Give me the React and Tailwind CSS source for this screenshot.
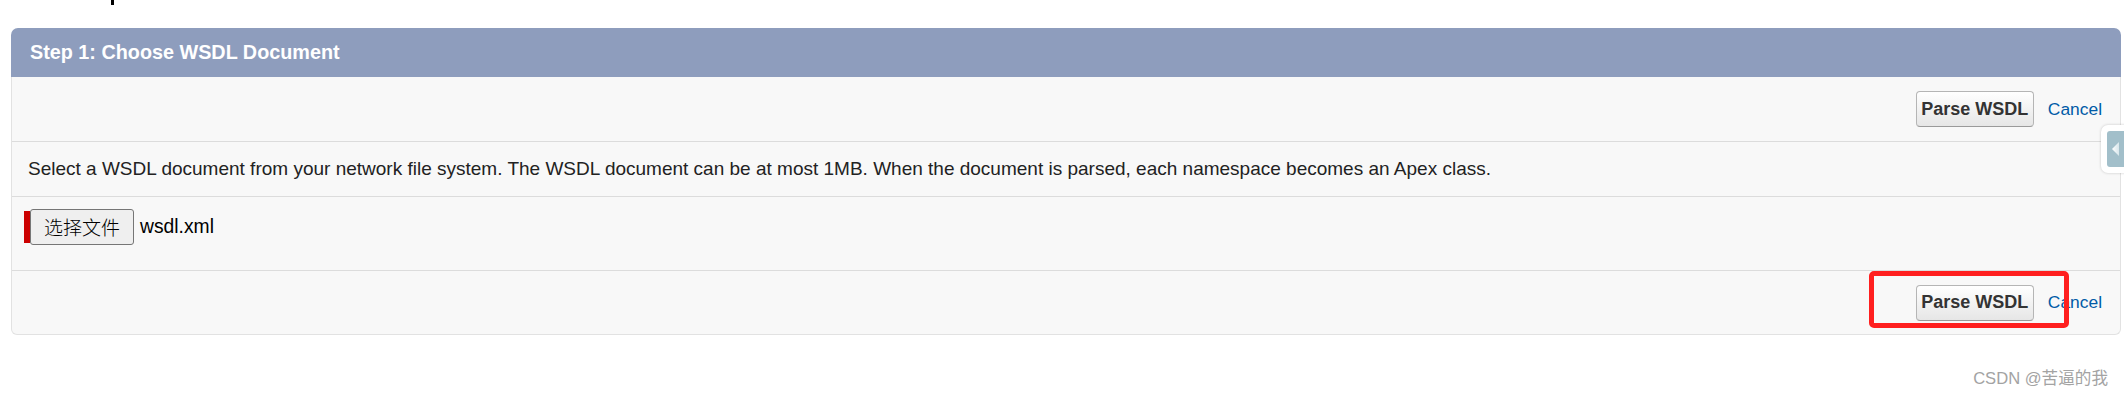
const font = "font-['Liberation_Sans',Arial,'Noto_Sans_CJK_SC',sans-serif]";

function ParseButton() {
  return (
    <button className="h-[36px] w-[118px] rounded-[4px] border border-[#b5b5b5] border-b-[#9a9a9a] bg-linear-to-b from-white to-[#e6e6e6] text-[18px] font-bold text-[#333]">
      Parse WSDL
    </button>
  );
}

function ButtonRow({ className = "" }) {
  return (
    <div className={`flex items-center justify-end gap-[14px] pr-[18px] ${className}`}>
      <ParseButton />
      <a href="#" className="text-[17.4px] text-[#015ba7]">Cancel</a>
    </div>
  );
}

export default function App() {
  return (
    <div className={`relative h-[399px] w-[2124px] overflow-hidden bg-white ${font}`}>
      {/* cut-off glyph of the page title above */}
      <div className="ml-[111px] h-[5px] w-[3px] bg-black" />

      <div className="ml-[11px] mt-[23px] w-[2110px]">
        <div className="flex h-[49px] items-center rounded-t-[7px] bg-[#8e9dbd] px-[19px]">
          <h2 className="text-[19.8px] font-bold text-white">Step 1: Choose WSDL Document</h2>
        </div>

        <div className="rounded-b-[6px] border border-t-0 border-[#e2e2e2] bg-[#f8f8f8]">
          <ButtonRow className="h-[65px] border-b border-[#dcdcdc]" />

          <div className="flex h-[55px] items-center border-b border-[#dcdcdc] pl-[16px] text-[19px] text-[#222]">
            Select a WSDL document from your network file system. The WSDL document can be at most 1MB. When the document is parsed, each namespace becomes an Apex class.
          </div>

          <div className="flex h-[74px] items-start border-b border-[#dcdcdc] pl-[12px] pt-[12px]">
            <div className="flex items-center">
              <span className="h-[32px] w-[6px] bg-[#c00]" />
              <button className="h-[36px] w-[104px] rounded-[3px] border border-[#767676] bg-[#efefef] font-['Noto_Sans_CJK_SC',sans-serif] text-[19px] font-light text-black">
                选择文件
              </button>
              <span className="ml-[6px] text-[19.3px] text-black">wsdl.xml</span>
            </div>
          </div>

          <ButtonRow className="h-[63px]" />
        </div>
      </div>

      <div className="mt-[36px] flex justify-end pr-[16px]">
        <span className="text-[16.6px] leading-none text-[#a3a3a3]">CSDN @苦逼的我</span>
      </div>

      {/* red annotation frame */}
      <div className="absolute left-[1869px] top-[271px] h-[57px] w-[200px] rounded-[5px] border-[5px] border-[#ff1f1f]" />

      {/* collapsed side tab */}
      <div className="absolute left-[2101px] top-[125px] flex h-[48px] w-[30px] items-center rounded-l-[7px] bg-white pl-[6px] shadow-[0_0_3px_rgba(0,0,0,0.2)]">
        <div className="flex h-[36px] w-full items-center rounded-l-[3px] bg-[#a2bfca] pl-[5px]">
          <svg width="7" height="14" viewBox="0 0 7 14">
            <defs>
              <linearGradient id="tri" x1="0" x2="1" y1="0" y2="0">
                <stop offset="0" stopColor="#ffffff" />
                <stop offset="1" stopColor="#d8e6eb" />
              </linearGradient>
            </defs>
            <path d="M7 0 L0 7 L7 14 Z" fill="url(#tri)" />
          </svg>
        </div>
      </div>
    </div>
  );
}
